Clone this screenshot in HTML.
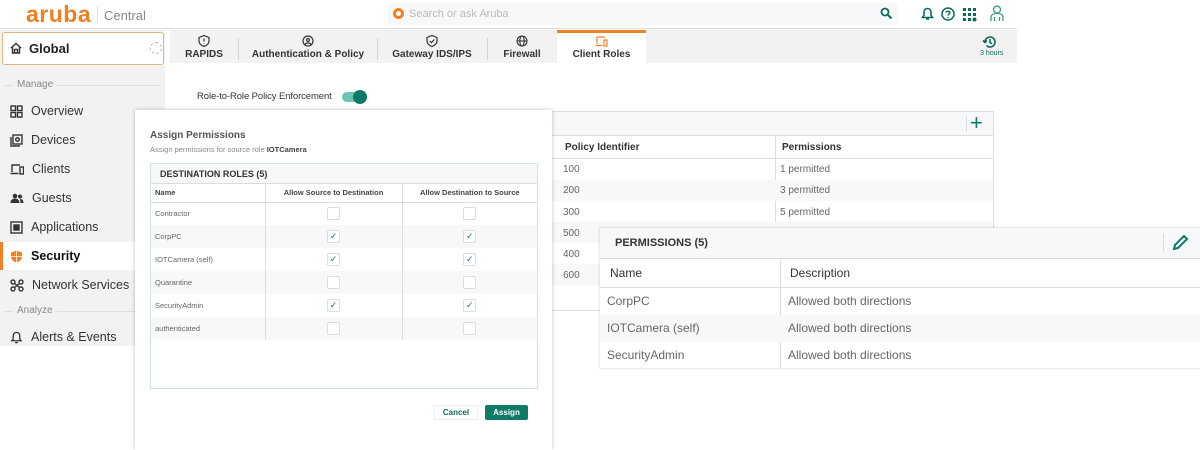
<!DOCTYPE html>
<html><head><meta charset="utf-8"><style>
*{box-sizing:border-box;margin:0;padding:0}
body{width:1200px;height:440px;overflow:hidden;background:#fff;font-family:"Liberation Sans",sans-serif;color:#333;position:relative}
.abs{position:absolute}
.side-item{position:absolute;left:0;width:165px;height:28px;display:flex;align-items:center;padding-left:10px;font-size:12.5px;color:#333}
.side-item svg{margin-right:8px}
.tab{position:absolute;top:30px;height:33px;display:flex;flex-direction:column;align-items:center;justify-content:flex-end;padding-bottom:3px;font-size:10px;font-weight:bold;color:#333}
.sep{position:absolute;top:38px;width:1px;height:22px;background:#d5d5d5}
table{border-collapse:collapse}
.cb{width:13px;height:13px;border:1px solid #ddd;border-radius:2px;margin:auto;display:flex;align-items:center;justify-content:center;background:#fff;color:#0d7a66;font-size:9px}
</style></head><body>
<!-- top bar -->
<div class="abs" style="left:0;top:0;width:1017px;height:29px;border-bottom:1px solid #ddd;background:#fff"></div>
<div class="abs" style="left:26px;top:1px;font-size:23px;font-weight:bold;color:#f08122;letter-spacing:0.5px">aruba</div>
<div class="abs" style="left:97px;top:6px;width:1px;height:17px;background:#ddd"></div>
<div class="abs" style="left:104px;top:8px;font-size:13px;color:#888">Central</div>
<div class="abs" style="left:388px;top:3px;width:510px;height:22px;background:#f7f8fa"></div>
<div class="abs" style="left:393px;top:8px;width:11px;height:11px;border-radius:50%;border:3px solid #f08122"></div>
<div class="abs" style="left:409px;top:8px;font-size:11px;color:#bbb">Search or ask Aruba</div>
<svg class="abs" style="left:880px;top:7px" width="13" height="13" viewBox="0 0 13 13"><circle cx="5" cy="5" r="3.5" fill="none" stroke="#0d6b5a" stroke-width="1.8"/><path d="M8 8l3.5 3.5" stroke="#0d6b5a" stroke-width="2"/></svg>
<svg class="abs" style="left:921px;top:7px" width="13" height="14" viewBox="0 0 13 14"><path d="M6.5 1.5c-2.5 0-3.5 2-3.5 4v3l-1.5 2h10l-1.5-2v-3c0-2-1-4-3.5-4zM5 12h3" fill="none" stroke="#0d6b5a" stroke-width="1.6"/></svg>
<svg class="abs" style="left:941px;top:7px" width="14" height="14" viewBox="0 0 14 14"><circle cx="7" cy="7" r="6" fill="none" stroke="#0d6b5a" stroke-width="1.5"/><path d="M5 5.5c0-1.5 4-1.5 4 0 0 1.3-2 1.3-2 3" fill="none" stroke="#0d6b5a" stroke-width="1.4"/><circle cx="7" cy="10.5" r=".8" fill="#0d6b5a"/></svg>
<svg class="abs" style="left:963px;top:8px" width="14" height="14" viewBox="0 0 14 14" fill="#0d6b5a"><rect x="0" y="0" width="3" height="3"/><rect x="5" y="0" width="3" height="3"/><rect x="10" y="0" width="3" height="3"/><rect x="0" y="5" width="3" height="3"/><rect x="5" y="5" width="3" height="3"/><rect x="10" y="5" width="3" height="3"/><rect x="0" y="10" width="3" height="3"/><rect x="5" y="10" width="3" height="3"/><circle cx="11.5" cy="11.5" r="2"/></svg>
<svg class="abs" style="left:990px;top:5px" width="14" height="17" viewBox="0 0 14 17"><circle cx="7" cy="4.5" r="3.5" fill="none" stroke="#3c9a86" stroke-width="1.3"/><path d="M1 16v-4c0-2.5 3-3.5 6-3.5s6 1 6 3.5v4M4.5 16v-4M9.5 16v-4" fill="none" stroke="#3c9a86" stroke-width="1.3"/></svg>

<!-- sidebar -->
<div class="abs" style="left:0;top:30px;width:165px;height:316px;background:#f2f2f2"></div>
<div class="abs" style="left:2px;top:32px;width:162px;height:33px;background:#fff;border:1px solid #e4b27d;border-radius:3px"></div>
<svg class="abs" style="left:10px;top:42px" width="12" height="12" viewBox="0 0 12 12"><path d="M1 6l5-4.5 5 4.5M2.5 5v6h7V5M4.5 11V7.5h3V11" fill="none" stroke="#333" stroke-width="1.4"/></svg>
<div class="abs" style="left:29px;top:41px;font-size:13px;font-weight:bold;color:#222">Global</div>
<div class="abs" style="left:150px;top:42px;width:12px;height:12px;border:1px dashed #bbb;border-radius:50%"></div>
<div class="abs" style="left:5px;top:85px;width:155px;height:1px;background:#ddd"></div>
<div class="abs" style="left:13px;top:79px;padding:0 4px;background:#f2f2f2;font-size:10px;color:#888">Manage</div>
<div class="side-item" style="top:97px"><svg width="13" height="13" viewBox="0 0 13 13" fill="none" stroke="#333" stroke-width="1.4"><rect x="1" y="1" width="4.5" height="4.5"/><rect x="7.5" y="1" width="4.5" height="4.5"/><rect x="1" y="7.5" width="4.5" height="4.5"/><rect x="7.5" y="7.5" width="4.5" height="4.5"/></svg>Overview</div>
<div class="side-item" style="top:126px"><svg width="13" height="13" viewBox="0 0 13 13" fill="none" stroke="#333" stroke-width="1.4"><rect x="3" y="1" width="9" height="9"/><path d="M1 3v9h9"/><circle cx="7.5" cy="5.5" r="1.8"/></svg>Devices</div>
<div class="side-item" style="top:155px"><svg width="14" height="13" viewBox="0 0 14 13" fill="none" stroke="#333" stroke-width="1.4"><path d="M2 9V2h8M0.5 10.5h8"/><rect x="10" y="4" width="3.5" height="7"/></svg>Clients</div>
<div class="side-item" style="top:184px"><svg width="14" height="13" viewBox="0 0 14 13" fill="#333"><circle cx="5" cy="4" r="2.3"/><circle cx="10" cy="4.5" r="2"/><path d="M0.5 11c0-3 2-4.5 4.5-4.5S9.5 8 9.5 11zM10 7c2 0 3.5 1 3.5 4h-3z"/></svg>Guests</div>
<div class="side-item" style="top:213px"><svg width="13" height="13" viewBox="0 0 13 13" fill="none" stroke="#333" stroke-width="1.4"><rect x="1" y="1" width="11" height="11"/><rect x="4" y="4" width="2" height="2" fill="#333"/><rect x="7" y="4" width="2" height="2" fill="#333"/><rect x="4" y="7" width="2" height="2" fill="#333"/><rect x="7" y="7" width="2" height="2" fill="#333"/></svg>Applications</div>
<div class="side-item" style="top:242px;background:#fff;font-weight:bold;color:#111"><div class="abs" style="left:0;top:0;width:3px;height:28px;background:#f08122"></div><svg width="13" height="13" viewBox="0 0 13 13"><path d="M6.5 0.5l5.5 2v4c0 3-2.5 5-5.5 6-3-1-5.5-3-5.5-6v-4z" fill="#f08122"/><path d="M6.5 0.5v12M1 6.5h11" stroke="#fff" stroke-width="0.8"/></svg>Security</div>
<div class="side-item" style="top:271px"><svg width="14" height="13" viewBox="0 0 14 13" fill="none" stroke="#333" stroke-width="1.4"><circle cx="3" cy="3" r="2"/><circle cx="11" cy="3" r="2"/><circle cx="3" cy="10" r="2"/><circle cx="11" cy="10" r="2"/><path d="M4.5 4.5l5 4M9.5 4.5l-5 4"/></svg>Network Services</div>
<div class="abs" style="left:5px;top:311px;width:155px;height:1px;background:#ddd"></div>
<div class="abs" style="left:13px;top:305px;padding:0 4px;background:#f2f2f2;font-size:10px;color:#888">Analyze</div>
<div class="side-item" style="top:323px"><svg width="13" height="13" viewBox="0 0 13 14"><path d="M6.5 1.5c-2.5 0-3.5 2-3.5 4v3l-1.5 2h10l-1.5-2v-3c0-2-1-4-3.5-4zM5 12.5h3" fill="none" stroke="#333" stroke-width="1.4"/></svg>Alerts &amp; Events</div>

<!-- tabs -->
<div class="abs" style="left:170px;top:30px;width:847px;height:33px;background:#f2f2f2"></div>
<div class="tab" style="left:180px;width:48px"><svg width="12" height="12" viewBox="0 0 12 12" fill="none" stroke="#333" stroke-width="1.2"><path d="M6 .5l5 2v3.5c0 3-2.5 4.5-5 5.5C3.5 10.5 1 9 1 6V2.5z"/><path d="M6 3.5v3M6 8v.5"/></svg><div style="margin-top:2px">RAPIDS</div></div>
<div class="sep" style="left:238px"></div>
<div class="tab" style="left:248px;width:120px"><svg width="12" height="12" viewBox="0 0 12 12" fill="none" stroke="#333" stroke-width="1.2"><circle cx="6" cy="6" r="5"/><circle cx="6" cy="5" r="1.5"/><path d="M3 9.5c1-2 5-2 6 0"/></svg><div style="margin-top:2px">Authentication &amp; Policy</div></div>
<div class="sep" style="left:377px"></div>
<div class="tab" style="left:387px;width:90px"><svg width="12" height="12" viewBox="0 0 12 12" fill="none" stroke="#333" stroke-width="1.2"><path d="M6 .5l5 2v3.5c0 3-2.5 4.5-5 5.5C3.5 10.5 1 9 1 6V2.5z"/><path d="M3.8 6l1.6 1.6L8.3 4.5"/></svg><div style="margin-top:2px">Gateway IDS/IPS</div></div>
<div class="sep" style="left:487px"></div>
<div class="tab" style="left:497px;width:50px"><svg width="12" height="12" viewBox="0 0 12 12" fill="none" stroke="#333" stroke-width="1.1"><circle cx="6" cy="6" r="5"/><ellipse cx="6" cy="6" rx="2.2" ry="5"/><path d="M1 6h10"/></svg><div style="margin-top:2px">Firewall</div></div>
<div class="tab" style="left:557px;width:89px;background:#fff;border-top:3px solid #f08122"><svg width="13" height="11" viewBox="0 0 13 11" fill="none" stroke="#f08122" stroke-width="1.2"><path d="M2 8V1h8M0.5 9.5h7"/><rect x="9" y="4" width="3" height="6"/></svg><div style="margin-top:2px">Client Roles</div></div>
<svg class="abs" style="left:982px;top:35px" width="15" height="14" viewBox="0 0 15 14" fill="none" stroke="#0d6b5a" stroke-width="1.6"><path d="M3 7a5 5 0 1 1 1.5 3.6"/><path d="M1 5.5l2 2 2-2"/><path d="M8 4v3.5l2 1.2"/></svg>
<div class="abs" style="left:980px;top:50px;font-size:7px;color:#0d6b5a">3 hours</div>

<div class="abs" style="left:197px;top:91px;font-size:9.5px;color:#333;letter-spacing:-0.1px">Role-to-Role Policy Enforcement</div>
<div class="abs" style="left:342px;top:92px;width:20px;height:10px;border-radius:5px;background:#6fc3b2"></div>
<div class="abs" style="left:353px;top:90px;width:14px;height:14px;border-radius:50%;background:#0d7a66"></div>

<!-- back table -->
<div class="abs" style="left:540px;top:111px;width:454px;height:200px;border:1px solid #ddd;background:#fff"></div>
<div class="abs" style="left:541px;top:112px;width:452px;height:24px;background:#f7f8f9;border-bottom:1px solid #ddd"></div>
<div class="abs" style="left:966px;top:116px;width:1px;height:16px;background:#ddd"></div>
<div class="abs" style="left:970px;top:110px;font-size:22px;color:#0d7a66;line-height:26px">+</div>
<div class="abs" style="left:775px;top:136px;width:1px;height:90px;background:#ddd"></div>
<div class="abs" style="left:541px;top:158px;width:452px;height:1px;background:#ddd"></div>
<div class="abs" style="left:565px;top:142px;font-size:10px;font-weight:bold;color:#333">Policy Identifier</div>
<div class="abs" style="left:782px;top:142px;font-size:10px;font-weight:bold;color:#333">Permissions</div>
<div class="abs" style="left:541px;top:180px;width:452px;height:21px;background:#f7f8f9"></div>
<div class="abs" style="left:541px;top:222px;width:452px;height:21px;background:#f7f8f9"></div>
<div class="abs" style="left:541px;top:264px;width:60px;height:21px;background:#f7f8f9"></div>
<div class="abs" style="left:563px;top:159px;font-size:10px;color:#666;line-height:21.3px">100<br>200<br>300<br>500<br>400<br>600</div>
<div class="abs" style="left:780px;top:159px;font-size:10px;color:#666;line-height:21.3px">1 permitted<br>3 permitted<br>5 permitted</div>

<!-- modal -->
<div class="abs" style="left:135px;top:110px;width:417px;height:340px;background:#fff;box-shadow:0 0 4px rgba(0,0,0,.25)"></div>
<div class="abs" style="left:150px;top:130px;font-size:10px;font-weight:bold;color:#555">Assign Permissions</div>
<div class="abs" style="left:150px;top:145px;font-size:7.5px;color:#888">Assign permissions for source role <b style="color:#444">IOTCamera</b></div>
<div class="abs" style="left:150px;top:163px;width:388px;height:226px;border:1px solid #cfe3de;border-radius:2px"></div>
<div class="abs" style="left:151px;top:164px;width:386px;height:20px;background:#f7f8f9;border-bottom:1px solid #ddd"></div>
<div class="abs" style="left:160px;top:169px;font-size:9px;font-weight:bold;color:#333">DESTINATION ROLES (5)</div>
<table class="abs" style="left:151px;top:184px;width:386px;font-size:7.5px;color:#666">
<tr style="height:18px;border-bottom:1px solid #ddd"><th style="width:114px;text-align:left;padding-left:4px;border-right:1px solid #ddd;color:#444">Name</th><th style="width:137px;border-right:1px solid #ddd;color:#444">Allow Source to Destination</th><th style="color:#444">Allow Destination to Source</th></tr>
<tr style="height:23px"><td style="padding-left:4px;border-right:1px solid #ddd">Contractor</td><td style="border-right:1px solid #ddd"><div class="cb"></div></td><td><div class="cb"></div></td></tr>
<tr style="height:23px;background:#f7f8f9"><td style="padding-left:4px;border-right:1px solid #ddd">CorpPC</td><td style="border-right:1px solid #ddd"><div class="cb">✓</div></td><td><div class="cb">✓</div></td></tr>
<tr style="height:23px"><td style="padding-left:4px;border-right:1px solid #ddd">IOTCamera (self)</td><td style="border-right:1px solid #ddd"><div class="cb">✓</div></td><td><div class="cb">✓</div></td></tr>
<tr style="height:23px;background:#f7f8f9"><td style="padding-left:4px;border-right:1px solid #ddd">Quarantine</td><td style="border-right:1px solid #ddd"><div class="cb"></div></td><td><div class="cb"></div></td></tr>
<tr style="height:23px"><td style="padding-left:4px;border-right:1px solid #ddd">SecurityAdmin</td><td style="border-right:1px solid #ddd"><div class="cb">✓</div></td><td><div class="cb">✓</div></td></tr>
<tr style="height:23px;background:#f7f8f9"><td style="padding-left:4px;border-right:1px solid #ddd">authenticated</td><td style="border-right:1px solid #ddd"><div class="cb"></div></td><td><div class="cb"></div></td></tr>
</table>
<div class="abs" style="left:434px;top:405px;width:44px;height:15px;border:1px solid #eee;font-size:8px;font-weight:bold;color:#0d6b5a;text-align:center;line-height:13px">Cancel</div>
<div class="abs" style="left:485px;top:405px;width:43px;height:15px;background:#0f7a66;border-radius:2px;font-size:8px;font-weight:bold;color:#fff;text-align:center;line-height:15px">Assign</div>

<!-- permissions panel -->
<div class="abs" style="left:600px;top:228px;width:600px;height:140px;background:#fff;box-shadow:0 0 3px rgba(0,0,0,.2)"></div>
<div class="abs" style="left:600px;top:228px;width:600px;height:31px;background:#f7f8f9;border-bottom:1px solid #ddd"></div>
<div class="abs" style="left:615px;top:237px;font-size:11px;font-weight:bold;color:#333">PERMISSIONS (5)</div>
<div class="abs" style="left:1163px;top:234px;width:1px;height:18px;background:#ddd"></div>
<svg class="abs" style="left:1172px;top:234px" width="17" height="17" viewBox="0 0 17 17"><path d="M2 15l1-4L12 2l3 3-9 9z" fill="none" stroke="#0d7a66" stroke-width="2"/></svg>
<div class="abs" style="left:780px;top:260px;width:1px;height:108px;background:#ddd"></div>
<div class="abs" style="left:600px;top:287px;width:600px;height:1px;background:#ddd"></div>
<div class="abs" style="left:610px;top:266px;font-size:12px;color:#333">Name</div>
<div class="abs" style="left:790px;top:266px;font-size:12px;color:#333">Description</div>
<div class="abs" style="left:600px;top:315px;width:600px;height:27px;background:#f7f8f9"></div>
<div class="abs" style="left:607px;top:288px;font-size:12px;color:#666;line-height:27px">CorpPC<br>IOTCamera (self)<br>SecurityAdmin</div>
<div class="abs" style="left:788px;top:288px;font-size:12px;color:#666;line-height:27px">Allowed both directions<br>Allowed both directions<br>Allowed both directions</div>
</body></html>
